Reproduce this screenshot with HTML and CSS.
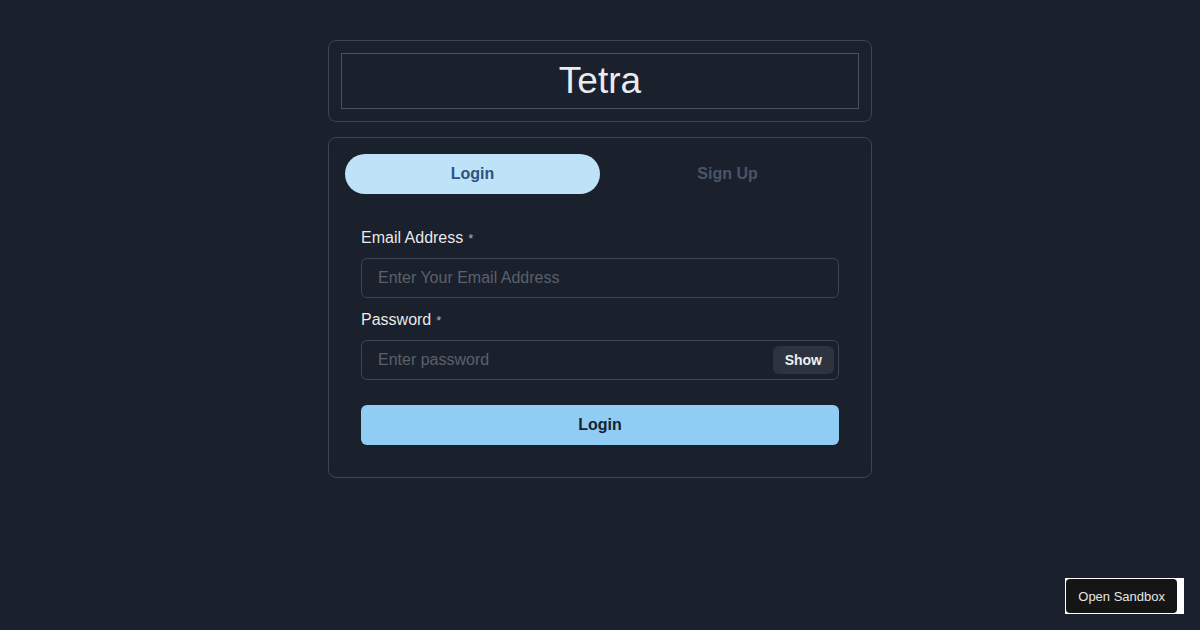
FILE: index.html
```html
<!DOCTYPE html>
<html lang="en">
<head>
    <meta charset="UTF-8">
    <meta name="viewport" content="width=device-width, initial-scale=1.0">
    <title>Tetra</title>
    <link rel="stylesheet" href="styles.css">
</head>
<body>
    <div class="container">
        <div class="brand-box">
            <div class="brand-inner">
                <h1>Tetra</h1>
            </div>
        </div>

        <div class="auth-box">
            <div class="tabs">
                <button class="tab active">Login</button>
                <button class="tab">Sign Up</button>
            </div>
            <div class="panel">
                <form class="form" onsubmit="return false;">
                    <div class="field">
                        <label>Email Address<span class="req">*</span></label>
                        <input type="email" placeholder="Enter Your Email Address">
                    </div>
                    <div class="field">
                        <label>Password<span class="req">*</span></label>
                        <div class="input-group">
                            <input type="password" placeholder="Enter password">
                            <button type="button" class="show-btn">Show</button>
                        </div>
                    </div>
                    <button type="submit" class="submit-btn">Login</button>
                </form>
            </div>
        </div>
    </div>

    <div class="sandbox">
        <button class="sandbox-btn">Open Sandbox</button>
    </div>
</body>
</html>
```

FILE: styles.css
```css
* {
    box-sizing: border-box;
}
body {
    font-family: "Liberation Sans", Arial, sans-serif;
    background-color: #1a202c;
    color: rgba(255, 255, 255, 0.92);
    margin: 0;
    padding: 0;
    height: 100vh;
}
.container {
    width: 544px;
    margin: 40px auto 0;
}
.brand-box {
    padding: 12px;
    border: 1px solid #3f4452;
    border-radius: 8px;
    margin-bottom: 15px;
}
.brand-inner {
    border: 1px solid #4a505c;
    text-align: center;
}
.brand-inner h1 {
    margin: 0;
    font-size: 37px;
    font-weight: 400;
    line-height: 54px;
    color: #e8ebef;
}
.auth-box {
    padding: 16px;
    border: 1px solid #3f4452;
    border-radius: 8px;
}
.tabs {
    display: flex;
}
.tab {
    flex: 1;
    height: 40px;
    border: none;
    background: none;
    border-radius: 9999px;
    font-family: inherit;
    font-size: 16px;
    font-weight: 700;
    color: #4a5568;
    cursor: pointer;
}
.tab.active {
    background-color: #bee3f8;
    color: #2c5282;
}
.panel {
    padding: 32px 16px 16px;
}
.form {
    display: flex;
    flex-direction: column;
}
.field {
    margin-bottom: 10px;
}
.field label {
    display: block;
    height: 24px;
    font-size: 16px;
    line-height: 24px;
    margin-bottom: 8px;
}
.req {
    margin-left: 5px;
    font-size: 13px;
    line-height: 1;
    color: #aab0b9;
}
.field input {
    width: 100%;
    height: 40px;
    padding: 0 16px;
    background: transparent;
    border: 1px solid #3f4452;
    border-radius: 6px;
    font-family: inherit;
    font-size: 16px;
    color: #fff;
}
.field input::placeholder {
    color: #5b606b;
}
.input-group {
    position: relative;
}
.input-group input {
    padding-right: 80px;
}
.show-btn {
    position: absolute;
    right: 5px;
    top: 6px;
    height: 28px;
    padding: 0 12px;
    border: none;
    border-radius: 6px;
    background-color: #2d333f;
    color: #edf0f4;
    font-family: inherit;
    font-size: 14px;
    font-weight: 700;
}
.submit-btn {
    margin-top: 15px;
    height: 40px;
    border: none;
    border-radius: 6px;
    background-color: #90cdf4;
    color: #1a202c;
    font-family: inherit;
    font-size: 16px;
    font-weight: 700;
    cursor: pointer;
}
.sandbox {
    position: fixed;
    right: 16px;
    bottom: 16px;
    background-color: #ffffff;
    padding: 1px 7px 1px 1px;
}
.sandbox-btn {
    display: block;
    height: 34px;
    padding: 0 12px;
    border: none;
    border-radius: 4px;
    background-color: #151515;
    color: #e6e6e6;
    font-family: "Liberation Sans", Arial, sans-serif;
    font-size: 13px;
}
```
